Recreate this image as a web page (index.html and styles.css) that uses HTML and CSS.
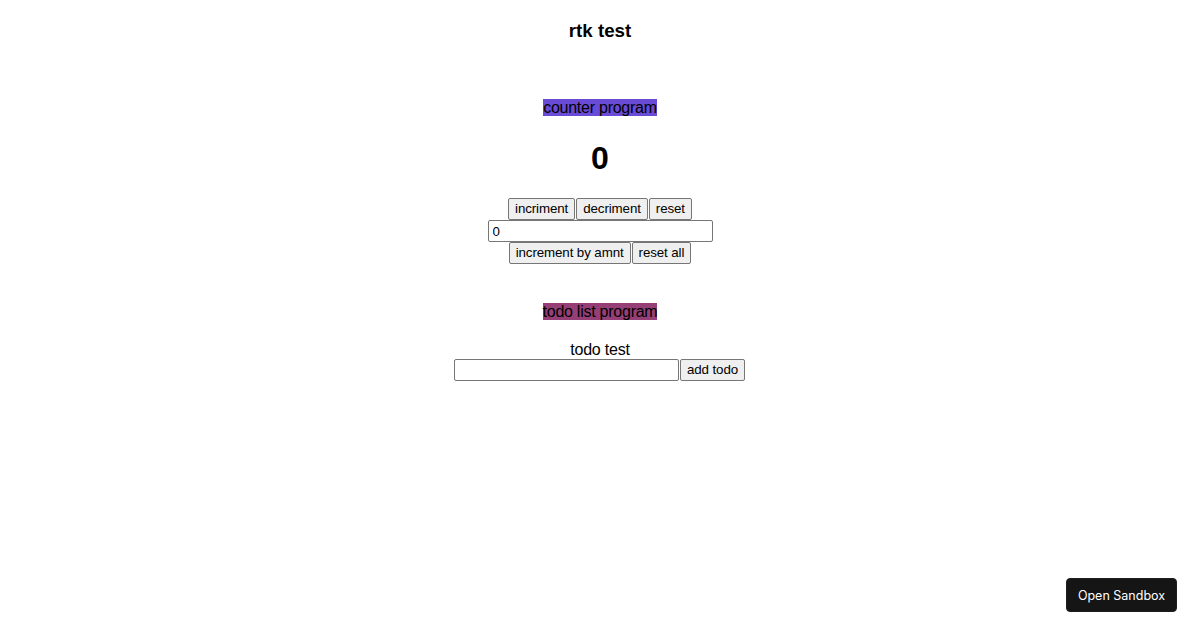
FILE: index.html
```html
<!DOCTYPE html>
<html>
<head>
<meta charset="utf-8">
<link rel="stylesheet" href="styles.css">
</head>
<body>
<div class="app">
  <h3 class="title">rtk test</h3>
  <div class="heading"><span class="tag tag-counter">counter program</span></div>
  <h1 class="count">0</h1>
  <div class="row row-first"><button class="btn">incriment</button><button class="btn">decriment</button><button class="btn">reset</button></div>
  <div class="row"><input class="field" type="text" value="0"></div>
  <div class="row"><button class="btn">increment by amnt</button><button class="btn">reset all</button></div>
  <div class="heading heading-todo"><span class="tag tag-todo">todo list program</span></div>
  <div class="todo-label">todo test</div>
  <div class="row"><input class="field" type="text" value=""><button class="btn">add todo</button></div>
</div>
<button class="sandbox">Open Sandbox</button>
</body>
</html>
```
FILE: styles.css
```css
html, body {
  margin: 0;
  padding: 0;
  background: #ffffff;
}
body {
  font-family: "Liberation Sans", Arial, sans-serif;
  color: #000;
  width: 1200px;
  height: 630px;
  overflow: hidden;
}
.app {
  display: flex;
  flex-direction: column;
  align-items: center;
  text-align: center;
}
.title {
  margin: 20px 0 0;
  font-size: 18.72px;
  line-height: 22px;
  font-weight: bold;
}
.heading {
  margin-top: 57px;
  font-size: 16px;
  line-height: 18px;
  letter-spacing: -0.25px;
}
.heading-todo {
  margin-top: 39px;
}
.tag-counter {
  background: #6a4bd6;
}
.tag-todo {
  background: #953f76;
}
.count {
  margin: 23px 0 0;
  font-size: 32px;
  font-weight: bold;
  height: 37px;
  line-height: 37px;
}
.row {
  display: flex;
  justify-content: center;
}
.row-first {
  margin-top: 21px;
}
.btn {
  font-family: "Liberation Sans", Arial, sans-serif;
  font-size: 13.33px;
  letter-spacing: -0.1px;
  height: 22px;
  padding: 1px 6px;
  border: 1px solid #767676;
  border-radius: 2px;
  background: #efefef;
  color: #000;
  margin: 0 0.5px;
  line-height: 16px;
}
.field {
  font-family: "Liberation Sans", Arial, sans-serif;
  font-size: 13.33px;
  box-sizing: border-box;
  width: 225px;
  height: 22px;
  padding: 1px 4px;
  border: 1px solid #767676;
  border-radius: 2px;
  margin: 0;
}
.todo-label {
  margin-top: 19px;
  font-size: 16px;
  line-height: 19px;
  letter-spacing: -0.2px;
}
.sandbox {
  position: fixed;
  right: 23px;
  bottom: 18px;
  width: 111px;
  height: 34px;
  background: #151515;
  color: #ffffff;
  border: 1px solid #1f1f1f;
  border-radius: 4px;
  font-family: Inter, "Liberation Sans", sans-serif;
  font-size: 12.5px;
  padding: 0;
}
```
